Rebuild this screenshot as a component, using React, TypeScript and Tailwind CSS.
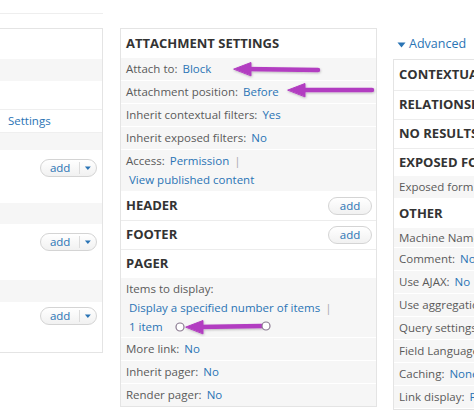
import React from "react";

const link = "text-[#2a74b5]";

function AddButton() {
  return (
    <span className="flex h-[18px] w-[44px] items-center justify-center rounded-full border border-[#d4d4d4] bg-gradient-to-b from-white to-[#f1f1f1] text-[11.5px] leading-none text-[#2a74b5]">
      add
    </span>
  );
}

function AddSplitButton() {
  return (
    <span className="flex h-[18px] w-[57px] items-center rounded-full border border-[#d4d4d4] bg-gradient-to-b from-white to-[#f1f1f1] text-[11.5px] leading-none text-[#2a74b5]">
      <span className="w-[39px] text-center">add</span>
      <span className="h-[12px] w-px bg-[#dcdcdc]" />
      <svg width="16" height="10" viewBox="0 0 16 10">
        <path d="M5 3.5h6l-3 3.5z" fill="#2a74b5" />
      </svg>
    </span>
  );
}

function Row({ label, value }: { label: string; value?: string }) {
  return (
    <div className="flex h-[23px] items-center border-b border-white bg-[#f6f6f6] pl-[5px] whitespace-nowrap">
      <span className="text-[#5a5a5a]">{label}</span>
      {value && <span className={`ml-[5px] ${link}`}>{value}</span>}
    </div>
  );
}

function Heading({ title, add, h }: { title: string; add?: boolean; h: string }) {
  return (
    <div className={`flex ${h} items-center justify-between border-b border-[#ececec] bg-white pl-[5px] pr-[4px]`}>
      <span className="text-[13px] font-bold text-[#333]">{title}</span>
      {add && <AddButton />}
    </div>
  );
}

function LeftColumn() {
  return (
    <div className="mt-[13px] w-[103px] shrink-0 border-t border-[#eeeeee] pt-[14px]">
      <div className="border-t border-r border-b border-[#e4e4e4]">
        <div className="h-[30px] bg-white" />
        <div className="h-[22px] bg-[#f6f6f6]" />
        <div className="h-[29px] border-b border-[#efefef] bg-white" />
        <div className="flex h-[23px] items-center border-b border-[#efefef] pl-[8px]">
          <span className={link}>Settings</span>
        </div>
        <div className="h-[17px] bg-[#f6f6f6]" />
        <div className="flex h-[36px] items-center justify-end pr-[5px]">
          <AddSplitButton />
        </div>
        <div className="h-[17px] bg-white" />
        <div className="h-[21px] bg-[#f6f6f6]" />
        <div className="flex h-[36px] items-center justify-end pr-[5px]">
          <AddSplitButton />
        </div>
        <div className="h-[20px] bg-white" />
        <div className="h-[22px] bg-[#f6f6f6]" />
        <div className="flex h-[28px] items-center justify-end pr-[5px]">
          <AddSplitButton />
        </div>
        <div className="h-[22px] bg-white" />
      </div>
    </div>
  );
}

function MiddleColumn() {
  return (
    <div className="mt-[28px] w-[257px] shrink-0 border border-[#e4e4e4] bg-white">
      <div className="flex h-[29px] items-center pl-[5px]">
        <span className="text-[13px] font-bold text-[#333]">ATTACHMENT SETTINGS</span>
      </div>
      <Row label="Attach to:" value="Block" />
      <Row label="Attachment position:" value="Before" />
      <Row label="Inherit contextual filters:" value="Yes" />
      <Row label="Inherit exposed filters:" value="No" />
      <div className="h-[42px] border-b border-white bg-[#f6f6f6] pt-px pl-[5px] leading-[19px]">
        <div>
          <span className="text-[#5a5a5a]">Access:</span>
          <span className={`ml-[5px] ${link}`}>Permission</span>
          <span className="ml-[5px] text-[#aaa]">|</span>
        </div>
        <div className={`pl-[3px] ${link}`}>View published content</div>
      </div>
      <Heading title="HEADER" add h="h-[29px]" />
      <Heading title="FOOTER" add h="h-[29px]" />
      <div className="flex h-[28px] items-center pl-[5px]">
        <span className="text-[13px] font-bold text-[#333]">PAGER</span>
      </div>
      <div className="h-[60px] border-b border-white bg-[#f6f6f6] pt-px pl-[5px] leading-[19px]">
        <div className="text-[#5a5a5a]">Items to display:</div>
        <div className="pl-[3px]">
          <span className={link}>Display a specified number of items</span>
          <span className="ml-[5px] text-[#aaa]">|</span>
        </div>
        <div className={`pl-[3px] ${link}`}>1 item</div>
      </div>
      <Row label="More link:" value="No" />
      <Row label="Inherit pager:" value="No" />
      <div className="flex h-[22px] items-center bg-[#f6f6f6] pl-[5px]">
        <span className="text-[#5a5a5a]">Render pager:</span>
        <span className={`ml-[5px] ${link}`}>No</span>
      </div>
    </div>
  );
}

function RightColumn() {
  return (
    <div className="mt-[31px] w-[160px] shrink-0">
      <div className="flex h-[28px] items-center pl-[4px] pb-[1px]">
        <span className={`flex items-center ${link} text-[12.5px]`}>
          <svg width="9" height="8" viewBox="0 0 9 8" className="mr-[3px]">
            <path d="M0.5 1.5h8l-4 5z" fill="#2a74b5" />
          </svg>
          Advanced
        </span>
      </div>
      <div className="border-t border-l border-b border-[#e4e4e4] bg-white whitespace-nowrap">
        <Heading title="CONTEXTUAL FILTERS" h="h-[31px]" />
        <Heading title="RELATIONSHIPS" h="h-[29px]" />
        <Heading title="NO RESULTS BEHAVIOR" h="h-[29px]" />
        <div className="flex h-[27px] items-center pl-[5px]">
          <span className="text-[13px] font-bold text-[#333]">EXPOSED FORM</span>
        </div>
        <Row label="Exposed form style:" value="Basic" />
        <div className="flex h-[29px] items-center pl-[5px]">
          <span className="text-[13px] font-bold text-[#333]">OTHER</span>
        </div>
        <div className="flex h-[20px] items-center border-b border-white bg-[#f6f6f6] pl-[5px]">
          <span className="text-[#5a5a5a]">Machine Name:</span>
          <span className={`ml-[5px] ${link}`}>attachment_1</span>
        </div>
        <Row label="Comment:" value="No comment" />
        <Row label="Use AJAX:" value="No" />
        <Row label="Use aggregation:" value="No" />
        <Row label="Query settings:" value="Settings" />
        <Row label="Field Language:" value="Current user's language" />
        <Row label="Caching:" value="None" />
        <Row label="Link display:" value="Page" />
      </div>
    </div>
  );
}

function Arrows() {
  const c = "#b23dc1";
  return (
    <svg className="pointer-events-none absolute inset-0" width="474" height="415" viewBox="0 0 474 415">
      <defs>
        <filter id="sh" x="-10%" y="-50%" width="120%" height="200%">
          <feDropShadow dx="0.5" dy="1" stdDeviation="0.8" floodColor="#000" floodOpacity="0.25" />
        </filter>
      </defs>
      <g filter="url(#sh)" fill={c} stroke={c} strokeLinecap="round" strokeLinejoin="round">
        <line x1="318" y1="70" x2="246" y2="69" strokeWidth="4.5" />
        <path d="M234 69 L251 62.5 L251 75.5 Z" strokeWidth="1" />
        <line x1="372" y1="90" x2="300" y2="90" strokeWidth="4.5" />
        <path d="M288 90 L305 83.5 L305 96.5 Z" strokeWidth="1" />
        <line x1="262" y1="326" x2="198" y2="327" strokeWidth="4.5" />
        <path d="M186 327 L203 320.5 L203 333.5 Z" strokeWidth="1" />
      </g>
      <circle cx="180" cy="327" r="4" fill="white" stroke="#8a7a90" strokeWidth="1.2" />
      <circle cx="266" cy="326" r="4" fill="white" stroke="#8a7a90" strokeWidth="1.2" />
    </svg>
  );
}

export default function App() {
  return (
    <div
      className="relative h-[415px] w-[474px] overflow-hidden bg-white text-[11.5px]"
      style={{ fontFamily: '"Open Sans", "DejaVu Sans", sans-serif' }}
    >
      <div className="flex items-start gap-[17px]">
        <LeftColumn />
        <div className="flex items-start gap-[16px]">
          <MiddleColumn />
          <RightColumn />
        </div>
      </div>
      <Arrows />
    </div>
  );
}
